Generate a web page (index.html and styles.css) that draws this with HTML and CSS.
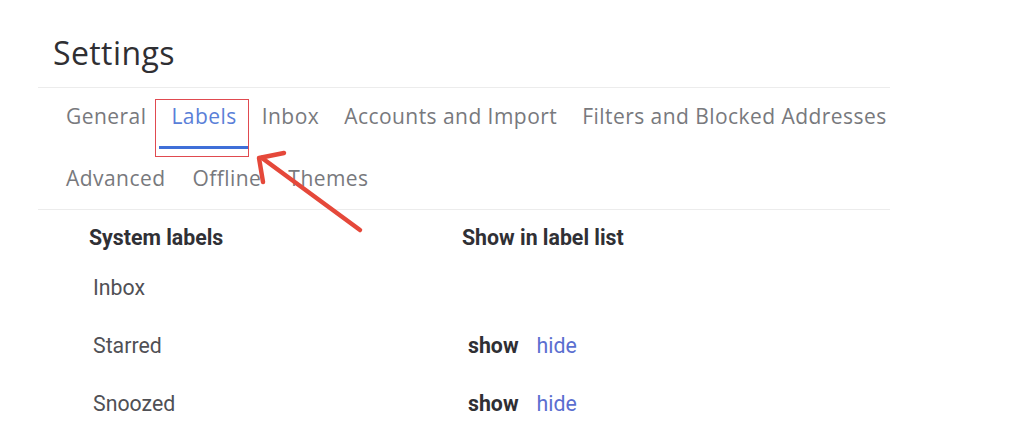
FILE: index.html
```html
<!DOCTYPE html>
<html>
<head>
<meta charset="utf-8">
<link rel="stylesheet" href="styles.css">
</head>
<body>
<div class="page">
  <h1 class="title">Settings</h1>
  <div class="panel">
    <nav class="tabs">
      <div class="tab-row">
        <span class="tab">General</span>
        <span class="tab active">Labels</span>
        <span class="tab">Inbox</span>
        <span class="tab">Accounts and Import</span>
        <span class="tab">Filters and Blocked Addresses</span>
      </div>
      <div class="tab-row">
        <span class="tab">Advanced</span>
        <span class="tab">Offline</span>
        <span class="tab">Themes</span>
      </div>
    </nav>
    <div class="labels">
      <div class="head c1">System labels</div>
      <div class="head c2">Show in label list</div>
      <div class="cell c1 name">Inbox</div>
      <div class="cell c2"></div>
      <div class="cell c1 name">Starred</div>
      <div class="cell c2 acts"><b class="show">show</b><span class="hide">hide</span></div>
      <div class="cell c1 name">Snoozed</div>
      <div class="cell c2 acts"><b class="show">show</b><span class="hide">hide</span></div>
    </div>
  </div>
  <div class="highlight"></div>
  <svg class="arrow" width="140" height="110" viewBox="0 0 140 110">
    <g fill="none" stroke="#e5483a" stroke-width="4.5" stroke-linecap="round" stroke-linejoin="round">
      <path d="M120 100 L22 28"/>
      <path d="M44 23 L19 28 L23 52"/>
    </g>
  </svg>
</div>
</body>
</html>
```
FILE: styles.css
```css
html, body {
  margin: 0;
  padding: 0;
  background: #fff;
}
.page {
  position: relative;
  width: 1024px;
  height: 427px;
  overflow: hidden;
}
.title {
  margin: 0;
  padding: 35px 0 16px 53px;
  font-family: "Open Sans", "Noto Sans", sans-serif;
  font-weight: 400;
  font-size: 32px;
  letter-spacing: 0.4px;
  line-height: 36px;
  color: #2f2f33;
}
.panel {
  margin-left: 38px;
  width: 852px;
}
.tabs {
  border-top: 1px solid #ececec;
  border-bottom: 1px solid #ececec;
  padding-left: 16px;
}
.tab-row {
  display: flex;
  gap: 1px;
  white-space: nowrap;
}
.tab-row:first-child {
  height: 61px;
}
.tab-row + .tab-row {
  height: 60px;
  gap: 3px;
}
.tab {
  display: flex;
  align-items: center;
  padding: 0 12px 2px;
  font-family: "Open Sans", "Noto Sans", sans-serif;
  font-size: 21px;
  letter-spacing: 0.45px;
  color: #78797d;
  box-sizing: border-box;
  border-bottom: 3px solid transparent;
}
.tab.active {
  color: #5a7fd8;
  border-bottom-color: #3f6fd8;
}
.tab-row + .tab-row .tab {
  border-bottom: 0;
  padding-bottom: 2px;
}
.labels {
  display: grid;
  grid-template-columns: 373px 1fr;
  grid-template-rows: 49px 58px 58px 58px;
  padding-left: 51px;
  font-family: Roboto, "Liberation Sans", sans-serif;
  font-size: 21.3px;
  color: #3a3a3f;
}
.head {
  font-weight: 700;
  padding-top: 14px;
  line-height: 28px;
  color: #303035;
}
.cell {
  line-height: 58px;
}
.cell.c1 {
  padding-left: 4px;
  color: #505055;
}
.acts {
  padding-left: 6px;
  display: flex;
  gap: 18px;
}
.show {
  font-weight: 700;
  color: #2f2f34;
}
.hide {
  color: #5b6fd0;
}
.highlight {
  position: absolute;
  left: 155px;
  top: 99px;
  width: 92px;
  height: 56px;
  border: 1.5px solid #e04a50;
}
.arrow {
  position: absolute;
  left: 240px;
  top: 130px;
}
```
